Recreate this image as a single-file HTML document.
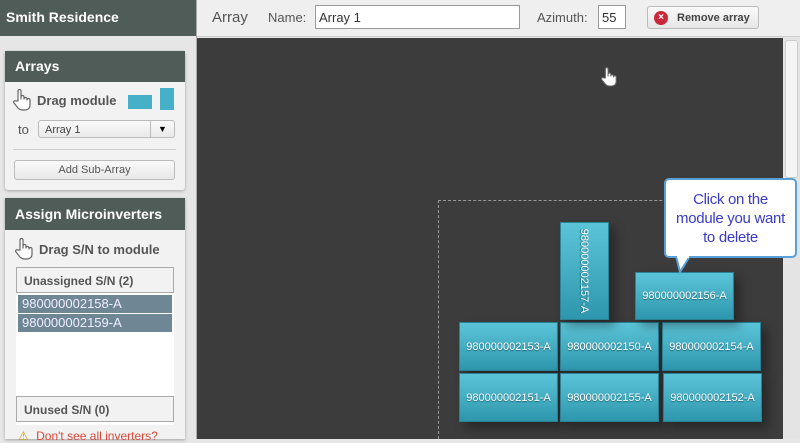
<!DOCTYPE html>
<html><head><style>
*{box-sizing:border-box;margin:0;padding:0}
body{width:800px;height:439px;overflow:hidden;background:#e6e6e6;font-family:"Liberation Sans",sans-serif;position:relative}
.a{position:absolute}
.hdr{background:#505c57;color:#fff;font-weight:bold}
.mod{position:absolute;background:linear-gradient(#5cc4d8,#2f97ad);border:1px solid #2a8296;color:#fff;font-size:11px;display:flex;align-items:center;justify-content:center;text-shadow:0 1px 1px #1d6373;box-shadow:6px 6px 10px rgba(0,0,0,.35)}
</style></head><body>
<svg width="0" height="0" style="position:absolute"><defs><symbol id="hand" viewBox="0 0 20 24"><path d="M6 13 V3 a1.5 1.5 0 0 1 3 0 V11 V9 a1.5 1.5 0 0 1 3 0 V11 a1.5 1.5 0 0 1 3 0 V12 a1.5 1.5 0 0 1 3 0 V17 c0 3 -2 5 -5 5 h-3 c-2 0 -3 -1 -4 -2 L2 15 c-1 -1 0 -3 2 -2 Z" fill="#fff" stroke="#666" stroke-width="1.2" stroke-linejoin="round"/></symbol></defs></svg>
<div class="a hdr" style="left:0;top:0;width:196px;height:36px;font-size:14px;padding:9px 0 0 6px">Smith Residence</div>
<div class="a" style="left:196px;top:0;width:1px;height:439px;background:#aaa"></div>
<div class="a" style="left:197px;top:0;width:603px;height:37px;background:#efefef;border-bottom:1px solid #ccc"></div>
<div class="a" style="left:212px;top:9px;font-size:15px;color:#555">Array</div>
<div class="a" style="left:268px;top:10px;font-size:13px;color:#555">Name:</div>
<div class="a" style="left:315px;top:5px;width:205px;height:24px;background:#fff;border:1px solid #999;font-size:13px;padding:4px 3px;color:#333">Array 1</div>
<div class="a" style="left:537px;top:10px;font-size:13px;color:#555">Azimuth:</div>
<div class="a" style="left:598px;top:5px;width:28px;height:24px;background:#fff;border:1px solid #999;font-size:13px;padding:4px 3px;color:#333">55</div>
<div class="a" style="left:647px;top:6px;width:112px;height:23px;background:linear-gradient(#fafafa,#e6e6e6);border:1px solid #bbb;border-radius:3px;font-size:11px;font-weight:bold;color:#444;padding:5px 0 0 29px">Remove array</div>
<div class="a" style="left:654px;top:11px;width:14px;height:14px;border-radius:50%;background:#c8283a;color:#fff;font-size:10px;text-align:center;line-height:14px;font-weight:bold">×</div>
<div class="a" style="left:197px;top:38px;width:586px;height:401px;background:#3c3c3c"></div>
<div class="a" style="left:783px;top:37px;width:17px;height:402px;background:#e4e4e4"></div>
<div class="a" style="left:785px;top:40px;width:13px;height:138px;background:#f5f5f5;border:1px solid #ccc;border-radius:3px"></div>
<div class="a" style="left:438px;top:200px;width:345px;height:239px;border-top:1px dashed #999;border-left:1px dashed #999"></div>
<div class="mod" style="left:459px;top:322px;width:99px;height:49px">980000002153-A</div>
<div class="mod" style="left:560px;top:322px;width:99px;height:49px">980000002150-A</div>
<div class="mod" style="left:662px;top:322px;width:99px;height:49px">980000002154-A</div>
<div class="mod" style="left:459px;top:373px;width:99px;height:49px">980000002151-A</div>
<div class="mod" style="left:560px;top:373px;width:99px;height:49px">980000002155-A</div>
<div class="mod" style="left:663px;top:373px;width:99px;height:49px">980000002152-A</div>
<div class="mod" style="left:560px;top:222px;width:49px;height:98px"><span style="transform:rotate(90deg);white-space:nowrap">980000002157-A</span></div>
<div class="mod" style="left:635px;top:272px;width:99px;height:48px">980000002156-A</div>
<div class="a" style="left:664px;top:178px;width:133px;height:80px;background:#fff;border:2px solid #5aa0d8;border-radius:5px;color:#3a3ac8;font-size:15px;text-align:center;padding:10px 1px 0;line-height:19px;letter-spacing:-0.3px">Click on the<br>module you want<br>to delete</div>
<svg class="a" style="left:674px;top:256px" width="20" height="18"><path d="M2 0 L6 16 L16 0" fill="#fff" stroke="#5aa0d8" stroke-width="2"/><rect x="3" y="0" width="12" height="2" fill="#fff"/></svg>
<svg class="a" style="left:600px;top:66px" width="18" height="22"><use href="#hand"/></svg>
<div class="a" style="left:5px;top:51px;width:180px;height:139px;background:#f2f2f2;border-radius:3px;box-shadow:0 1px 3px rgba(0,0,0,.3)"></div>
<div class="a hdr" style="left:5px;top:51px;width:180px;height:31px;font-size:14px;padding:7px 0 0 10px">Arrays</div>
<svg class="a" style="left:12px;top:88px" width="20" height="24"><use href="#hand"/></svg>
<div class="a" style="left:37px;top:93px;font-size:13px;color:#555;font-weight:bold">Drag module</div>
<div class="a" style="left:128px;top:95px;width:24px;height:14px;background:#45b0c8"></div>
<div class="a" style="left:160px;top:88px;width:14px;height:22px;background:#45b0c8"></div>
<div class="a" style="left:18px;top:122px;font-size:13px;color:#555">to</div>
<div class="a" style="left:38px;top:120px;width:137px;height:18px;background:linear-gradient(#fafafa,#eaeaea);border:1px solid #bbb;border-radius:3px;font-size:11px;color:#444;padding:3px 0 0 6px">Array 1<span style="position:absolute;right:0;top:0;width:24px;height:16px;border-left:1px solid #bbb;text-align:center;font-size:9px;line-height:16px;color:#000">▼</span></div>
<div class="a" style="left:13px;top:149px;width:163px;height:1px;background:#ccc"></div>
<div class="a" style="left:14px;top:160px;width:161px;height:20px;background:linear-gradient(#fafafa,#e8e8e8);border:1px solid #bbb;border-radius:3px;font-size:11px;color:#555;text-align:center;padding-top:3px">Add Sub-Array</div>
<div class="a" style="left:5px;top:198px;width:180px;height:241px;background:#f2f2f2;box-shadow:0 1px 3px rgba(0,0,0,.3)"></div>
<div class="a hdr" style="left:5px;top:198px;width:180px;height:32px;font-size:14px;padding:8px 0 0 10px">Assign Microinverters</div>
<svg class="a" style="left:14px;top:237px" width="20" height="24"><use href="#hand"/></svg>
<div class="a" style="left:39px;top:242px;font-size:13px;color:#555;font-weight:bold">Drag S/N to module</div>
<div class="a" style="left:16px;top:267px;width:158px;height:158px;background:#fff"></div>
<div class="a" style="left:16px;top:267px;width:158px;height:26px;background:#f2f2f2;border:1px solid #aaa;font-size:12px;color:#555;font-weight:bold;padding:6px 0 0 7px">Unassigned S/N (2)</div>
<div class="a" style="left:18px;top:295px;width:154px;height:18px;background:#6f8795;color:#eef;font-size:13px;padding:1px 0 0 4px">980000002158-A</div>
<div class="a" style="left:18px;top:314px;width:154px;height:18px;background:#6f8795;color:#eef;font-size:13px;padding:1px 0 0 4px">980000002159-A</div>
<div class="a" style="left:16px;top:396px;width:158px;height:26px;background:#f2f2f2;border:1px solid #aaa;font-size:12px;color:#555;font-weight:bold;padding:6px 0 0 7px">Unused S/N (0)</div>
<div class="a" style="left:18px;top:429px;font-size:12px;color:#d94a3a"><span style="color:#c9a000">⚠</span> <span style="margin-left:4px">Don't see all inverters?</span></div>
</body></html>
